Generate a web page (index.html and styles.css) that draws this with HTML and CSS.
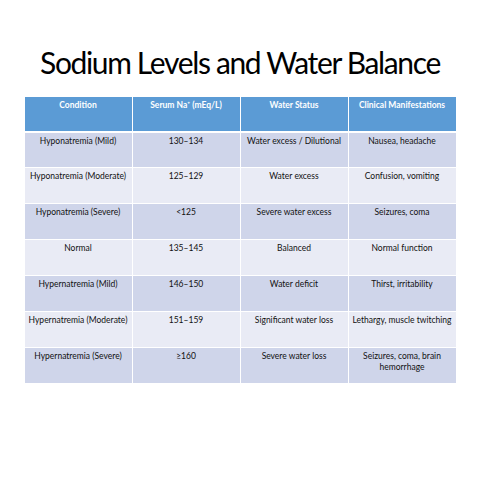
FILE: index.html
```html
<!DOCTYPE html>
<html>
<head>
<meta charset="utf-8">
<link rel="stylesheet" href="styles.css">
</head>
<body>
<div class="slide">
  <h1 class="title">Sodium Levels and Water Balance</h1>
  <table class="grid">
    <thead>
      <tr><th>Condition</th><th>Serum Na⁺ (mEq/L)</th><th>Water Status</th><th>Clinical Manifestations</th></tr>
    </thead>
    <tbody>
      <tr class="odd"><td>Hyponatremia (Mild)</td><td>130–134</td><td>Water excess / Dilutional</td><td>Nausea, headache</td></tr>
      <tr class="even"><td>Hyponatremia (Moderate)</td><td>125–129</td><td>Water excess</td><td>Confusion, vomiting</td></tr>
      <tr class="odd"><td>Hyponatremia (Severe)</td><td>&lt;125</td><td>Severe water excess</td><td>Seizures, coma</td></tr>
      <tr class="even"><td>Normal</td><td>135–145</td><td>Balanced</td><td>Normal function</td></tr>
      <tr class="odd"><td>Hypernatremia (Mild)</td><td>146–150</td><td>Water deficit</td><td>Thirst, irritability</td></tr>
      <tr class="even"><td>Hypernatremia (Moderate)</td><td>151–159</td><td>Significant water loss</td><td>Lethargy, muscle twitching</td></tr>
      <tr class="odd"><td>Hypernatremia (Severe)</td><td>≥160</td><td>Severe water loss</td><td>Seizures, coma, brain hemorrhage</td></tr>
    </tbody>
  </table>
</div>
</body>
</html>
```
FILE: styles.css
```css
html, body {
  margin: 0;
  padding: 0;
  background: #ffffff;
}
.slide {
  width: 480px;
  height: 480px;
  font-family: Lato, "Liberation Sans", sans-serif;
  display: flex;
  flex-direction: column;
  align-items: center;
}
.title {
  margin: 42px 0 0 0;
  font-family: Lato, "Liberation Sans", sans-serif;
  font-weight: 400;
  font-size: 30px;
  letter-spacing: -1.35px;
  line-height: 40px;
  white-space: nowrap;
  color: #000;
}
.grid {
  margin-top: 14px;
  width: 432px;
  border-collapse: collapse;
  table-layout: fixed;
  font-size: 8.5px;
}
.grid th, .grid td {
  width: 108px;
  text-align: center;
  vertical-align: top;
  padding: 3px 3px 0 3px;
  border: 1px solid #ffffff;
  line-height: 11px;
  box-sizing: border-box;
}
.grid th {
  background: #5b9bd5;
  color: #ffffff;
  font-weight: 700;
  height: 35px;
  border-bottom: 2px solid #ffffff;
}
.grid td {
  height: 36px;
  color: #111;
}
.odd td { background: #cfd5ea; }
.even td { background: #e9ebf5; }
```
